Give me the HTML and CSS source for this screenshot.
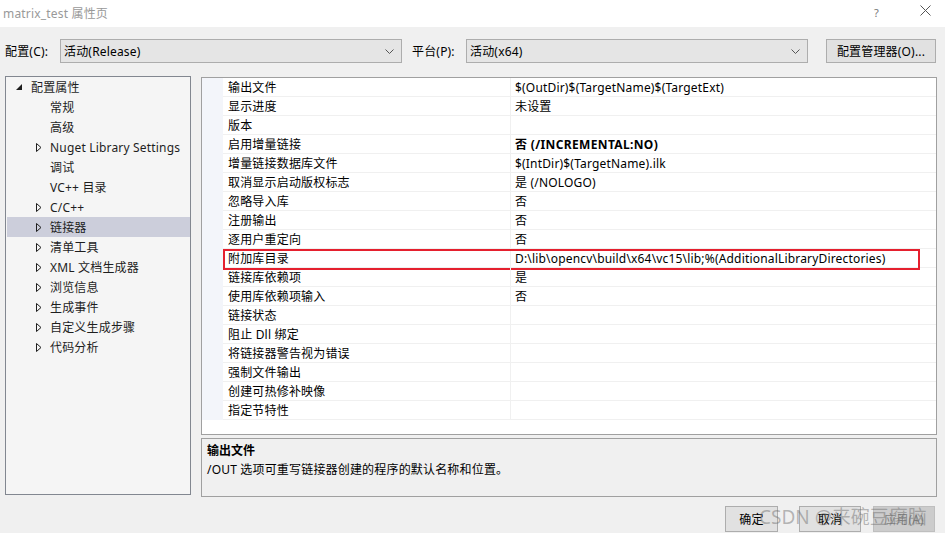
FILE: index.html
```html
<!DOCTYPE html>
<html>
<head>
<meta charset="utf-8">
<link rel="stylesheet" href="styles.css">
</head>
<body>
<div class="titlebar">
  <span class="title">matrix_test 属性页</span>
  <span class="help">?</span>
  <svg class="close" width="11" height="11" viewBox="0 0 11 11"><path d="M0.5 0.5 L10.5 10.5 M10.5 0.5 L0.5 10.5" stroke="#555" stroke-width="1" fill="none"/></svg>
</div>

<div class="config">
  <span class="label l1">配置(C):</span>
  <div class="combo"><span>活动(Release)</span><svg width="9" height="6" viewBox="0 0 9 6"><path d="M0.5 0.5 L4.5 4.5 L8.5 0.5" stroke="#555" fill="none"/></svg></div>
  <span class="label l2">平台(P):</span>
  <div class="combo"><span>活动(x64)</span><svg width="9" height="6" viewBox="0 0 9 6"><path d="M0.5 0.5 L4.5 4.5 L8.5 0.5" stroke="#555" fill="none"/></svg></div>
  <div class="btn mgr">配置管理器(O)...</div>
</div>

<div class="main">
  <div class="tree">
    <div class="node root"><span class="twisty"><svg width="6" height="6" viewBox="0 0 6 6"><path d="M6 0 L6 6 L0 6 Z" fill="#1e1e1e"/></svg></span>配置属性</div>
    <div class="node child"><span class="twisty"></span>常规</div>
    <div class="node child"><span class="twisty"></span>高级</div>
    <div class="node child"><span class="twisty"><svg class="arr" width="6" height="9" viewBox="0 0 6 9"><path d="M0.5 0.5 L5 4.5 L0.5 8.5 Z" fill="none" stroke="#1e1e1e"/></svg></span>Nuget Library Settings</div>
    <div class="node child"><span class="twisty"></span>调试</div>
    <div class="node child"><span class="twisty"></span>VC++ 目录</div>
    <div class="node child"><span class="twisty"><svg class="arr" width="6" height="9" viewBox="0 0 6 9"><path d="M0.5 0.5 L5 4.5 L0.5 8.5 Z" fill="none" stroke="#1e1e1e"/></svg></span>C/C++</div>
    <div class="node child selected"><span class="twisty"><svg class="arr" width="6" height="9" viewBox="0 0 6 9"><path d="M0.5 0.5 L5 4.5 L0.5 8.5 Z" fill="none" stroke="#1e1e1e"/></svg></span>链接器</div>
    <div class="node child"><span class="twisty"><svg class="arr" width="6" height="9" viewBox="0 0 6 9"><path d="M0.5 0.5 L5 4.5 L0.5 8.5 Z" fill="none" stroke="#1e1e1e"/></svg></span>清单工具</div>
    <div class="node child"><span class="twisty"><svg class="arr" width="6" height="9" viewBox="0 0 6 9"><path d="M0.5 0.5 L5 4.5 L0.5 8.5 Z" fill="none" stroke="#1e1e1e"/></svg></span>XML 文档生成器</div>
    <div class="node child"><span class="twisty"><svg class="arr" width="6" height="9" viewBox="0 0 6 9"><path d="M0.5 0.5 L5 4.5 L0.5 8.5 Z" fill="none" stroke="#1e1e1e"/></svg></span>浏览信息</div>
    <div class="node child"><span class="twisty"><svg class="arr" width="6" height="9" viewBox="0 0 6 9"><path d="M0.5 0.5 L5 4.5 L0.5 8.5 Z" fill="none" stroke="#1e1e1e"/></svg></span>生成事件</div>
    <div class="node child"><span class="twisty"><svg class="arr" width="6" height="9" viewBox="0 0 6 9"><path d="M0.5 0.5 L5 4.5 L0.5 8.5 Z" fill="none" stroke="#1e1e1e"/></svg></span>自定义生成步骤</div>
    <div class="node child"><span class="twisty"><svg class="arr" width="6" height="9" viewBox="0 0 6 9"><path d="M0.5 0.5 L5 4.5 L0.5 8.5 Z" fill="none" stroke="#1e1e1e"/></svg></span>代码分析</div>
  </div>

  <div class="right">
    <div class="grid">
      <div class="row"><span class="gut"></span><span class="name">输出文件</span><span class="val">$(OutDir)$(TargetName)$(TargetExt)</span></div>
      <div class="row"><span class="gut"></span><span class="name">显示进度</span><span class="val">未设置</span></div>
      <div class="row"><span class="gut"></span><span class="name">版本</span><span class="val"></span></div>
      <div class="row"><span class="gut"></span><span class="name">启用增量链接</span><span class="val bold">否 (/INCREMENTAL:NO)</span></div>
      <div class="row"><span class="gut"></span><span class="name">增量链接数据库文件</span><span class="val">$(IntDir)$(TargetName).ilk</span></div>
      <div class="row"><span class="gut"></span><span class="name">取消显示启动版权标志</span><span class="val">是 (/NOLOGO)</span></div>
      <div class="row"><span class="gut"></span><span class="name">忽略导入库</span><span class="val">否</span></div>
      <div class="row"><span class="gut"></span><span class="name">注册输出</span><span class="val">否</span></div>
      <div class="row"><span class="gut"></span><span class="name">逐用户重定向</span><span class="val">否</span></div>
      <div class="row marked"><span class="gut"></span><span class="name">附加库目录</span><span class="val">D:\lib\opencv\build\x64\vc15\lib;%(AdditionalLibraryDirectories)</span><span class="redbox"></span></div>
      <div class="row"><span class="gut"></span><span class="name">链接库依赖项</span><span class="val">是</span></div>
      <div class="row"><span class="gut"></span><span class="name">使用库依赖项输入</span><span class="val">否</span></div>
      <div class="row"><span class="gut"></span><span class="name">链接状态</span><span class="val"></span></div>
      <div class="row"><span class="gut"></span><span class="name">阻止 Dll 绑定</span><span class="val"></span></div>
      <div class="row"><span class="gut"></span><span class="name">将链接器警告视为错误</span><span class="val"></span></div>
      <div class="row"><span class="gut"></span><span class="name">强制文件输出</span><span class="val"></span></div>
      <div class="row"><span class="gut"></span><span class="name">创建可热修补映像</span><span class="val"></span></div>
      <div class="row"><span class="gut"></span><span class="name">指定节特性</span><span class="val"></span></div>
    </div>
    <div class="desc">
      <div class="desc-title">输出文件</div>
      <div class="desc-text">/OUT 选项可重写链接器创建的程序的默认名称和位置。</div>
    </div>
  </div>
</div>

<div class="footer">
  <div class="btn ok">确定</div>
  <div class="btn cancel">取消</div>
  <div class="btn apply">应用(A)</div>
</div>

<div class="watermark">CSDN @来碗豆腐脑</div>
</body>
</html>
```

FILE: styles.css
```css
* { box-sizing: border-box; }
body {
  margin: 0;
  width: 945px;
  height: 533px;
  overflow: hidden;
  position: relative;
  background: #f0f0f0;
  font-family: "Noto Sans", "Noto Sans CJK SC", sans-serif;
  font-size: 12px;
  line-height: 16px;
  letter-spacing: 0.18px;
  color: #000;
}
.titlebar {
  height: 27px;
  background: #fff;
  display: flex;
  align-items: center;
  padding-left: 3px;
}
.title { flex: 1; color: #999; }
.help { color: #777; font-size: 11px; margin-right: 41px; margin-top: -2px; }
.close { margin-right: 14px; margin-top: -6px; }

.config {
  display: flex;
  align-items: center;
  height: 24px;
  margin-top: 12px;
  padding-left: 5px;
}
.label { padding-top: 1px; }
.label.l1 { width: 55px; }
.label.l2 { width: 54px; margin-left: 10px; }
.combo {
  width: 342px;
  height: 24px;
  border: 1px solid #adadad;
  background: #e5e5e5;
  display: flex;
  align-items: center;
  justify-content: space-between;
  padding: 1px 7px 0 3px;
}
.btn {
  height: 24px;
  border: 1px solid #adadad;
  background: #e1e1e1;
  display: flex;
  align-items: center;
  justify-content: center;
  padding-top: 1px;
}
.btn.mgr { width: 110px; margin-left: 18px; }

.main {
  display: flex;
  margin-top: 13px;
  padding-left: 5px;
  gap: 10px;
}
.tree {
  width: 186px;
  height: 419px;
  border: 1px solid #828790;
  background: #f5f5f5;
  color: #1e1e1e;
}
.node {
  height: 20px;
  display: flex;
  align-items: center;
  margin-left: 1px;
  white-space: nowrap;
  padding-top: 1px;
}
.node.root { padding-left: 9px; }
.node.root .twisty { width: 15px; }
.node.child { padding-left: 29px; }
.node.child .twisty { width: 14px; }
.twisty { display: flex; align-items: center; height: 19px; margin-top: -1px; }
.node.selected { background: #cccedb; }

.right {
  width: 736px;
  display: flex;
  flex-direction: column;
  gap: 3px;
}
.grid {
  margin-top: 1px;
  height: 358px;
  border: 1px solid #a0a0a0;
  background: #fff;
}
.row {
  display: flex;
  height: 19px;
  position: relative;
}
.gut { width: 21px; background: #f3f5fa; }
.name {
  width: 288px;
  padding: 2px 0 0 5px;
  border-right: 1px solid #f0f0f0;
  border-bottom: 1px solid #f0f0f0;
  display: flex;
  align-items: center;
  white-space: nowrap;
}
.val {
  flex: 1;
  padding: 2px 0 0 4px;
  border-bottom: 1px solid #f0f0f0;
  display: flex;
  align-items: center;
  white-space: nowrap;
}
.val.bold { font-weight: bold; letter-spacing: 0.35px; }
.redbox {
  position: absolute;
  left: 21px;
  top: 0;
  width: 697px;
  height: 21px;
  border: 2px solid #e5202e;
  pointer-events: none;
}
.desc {
  height: 59px;
  border: 1px solid #a0a0a0;
  background: #f0f0f0;
  padding: 3px 5px 0 5px;
}
.desc-title { font-weight: bold; height: 18px; display: flex; align-items: center; letter-spacing: 0; }
.desc-text { height: 19px; display: flex; align-items: center; }

.footer {
  display: flex;
  justify-content: flex-end;
  margin-top: 9px;
  padding-right: 10px;
}
.footer .btn { height: 26px; }
.btn.ok { width: 53px; }
.btn.cancel { width: 62px; margin-left: 21px; }
.btn.apply {
  width: 62px;
  margin-left: 12px;
  background: #cccccc;
  border-color: #bfbfbf;
  color: #838383;
}
.watermark {
  position: absolute;
  left: 759px;
  top: 504px;
  font-size: 19px;
  line-height: 26px;
  letter-spacing: 0;
  color: rgba(105, 105, 105, 0.45);
  white-space: nowrap;
}
```
